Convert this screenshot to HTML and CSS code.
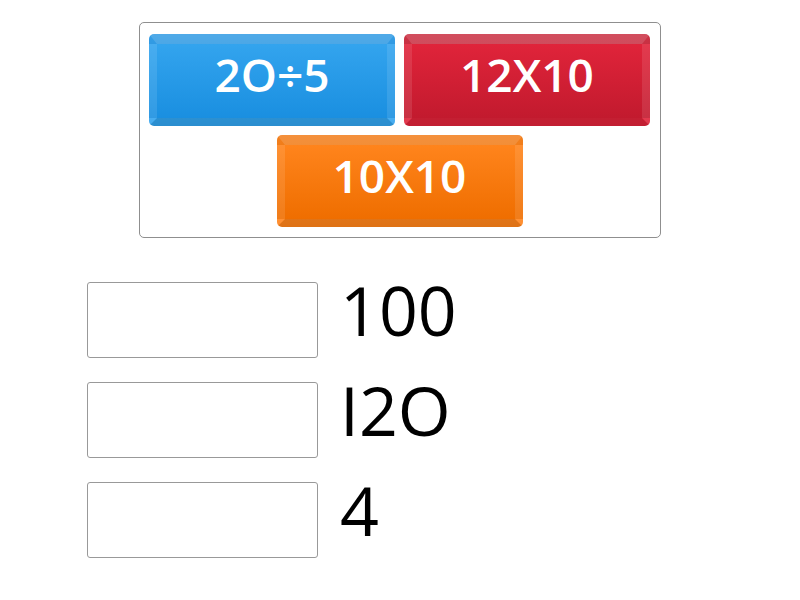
FILE: index.html
```html
<!DOCTYPE html>
<html>
<head>
    <meta charset="UTF-8">
    <title>Match up</title>
    <link rel="stylesheet" href="styles.css">
</head>
<body>
    <div class="bank">
        <div class="tile tile-blue">2O÷5</div>
        <div class="tile tile-red">12X10</div>
        <div class="tile tile-orange">10X10</div>
    </div>
    <div class="answers">
        <div class="row">
            <div class="slot"></div>
            <div class="label">100</div>
        </div>
        <div class="row">
            <div class="slot"></div>
            <div class="label">I2O</div>
        </div>
        <div class="row">
            <div class="slot"></div>
            <div class="label">4</div>
        </div>
    </div>
</body>
</html>
```

FILE: styles.css
```css
body {
    margin: 0;
    padding-top: 22px;
    font-family: "Open Sans", "Noto Sans", sans-serif;
    background-color: #fff;
}

.bank {
    width: 522px;
    margin: 0 auto;
    border: 1px solid #8f8f8f;
    border-radius: 5px;
    padding: 11px 10px 10px 9px;
    box-sizing: border-box;
    display: flex;
    flex-wrap: wrap;
    justify-content: center;
    gap: 9px;
}

.tile {
    width: 246px;
    height: 92px;
    box-sizing: border-box;
    border-style: solid;
    border-width: 10px 8px 8px 8px;
    border-color: rgba(255,255,255,.22) rgba(255,255,255,.1) rgba(0,0,0,.12) rgba(255,255,255,.1);
    border-radius: 5px;
    display: flex;
    align-items: center;
    justify-content: center;
    color: #fff;
    font-size: 46px;
    font-weight: 600;
    padding-bottom: 14px;
}

.tile-blue {
    background: linear-gradient(#33a4ee, #1a8fe0);
}

.tile-red {
    background: linear-gradient(#e0243a, #c21a2e);
}

.tile-orange {
    background: linear-gradient(#ff841c, #ef6e00);
}

.answers {
    margin: 44px 0 0 87px;
    display: flex;
    flex-direction: column;
    gap: 24px;
}

.row {
    display: flex;
    align-items: flex-start;
    gap: 22px;
}

.slot {
    width: 231px;
    height: 76px;
    box-sizing: border-box;
    border: 1px solid #999;
    border-radius: 3px;
}

.label {
    font-size: 68px;
    line-height: 56px;
    color: #000;
}
```
